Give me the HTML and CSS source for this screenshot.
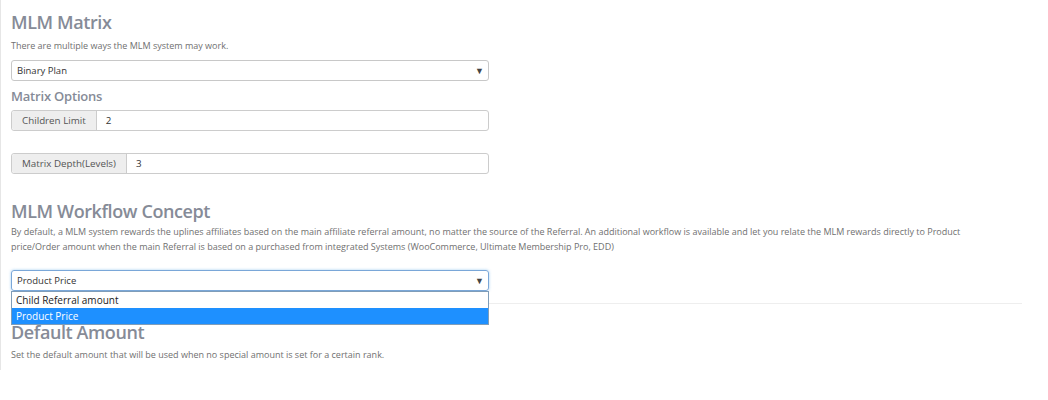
FILE: index.html
```html
<!DOCTYPE html>
<html lang="en">
<head>
    <meta charset="UTF-8">
    <title>MLM Settings</title>
    <link rel="stylesheet" href="styles.css">
</head>
<body>
    <div class="panel">
        <div class="section">
            <h3>MLM Matrix</h3>
            <p class="help">There are multiple ways the MLM system may work.</p>
            <div class="select">Binary Plan<span class="caret">&#9660;</span></div>

            <h4>Matrix Options</h4>
            <div class="input-group">
                <span class="addon">Children Limit</span>
                <span class="field">2</span>
            </div>
            <div class="input-group second">
                <span class="addon">Matrix Depth(Levels)</span>
                <span class="field">3</span>
            </div>
        </div>

        <div class="section workflow">
            <h3>MLM Workflow Concept</h3>
            <p class="help">By default, a MLM system rewards the uplines affiliates based on the main affiliate referral amount, no matter the source of the Referral. An additional workflow is available and let you relate the MLM rewards directly to Product price/Order amount when the main Referral is based on a purchased from integrated Systems (WooCommerce, Ultimate Membership Pro, EDD)</p>
            <div class="select-wrap">
                <div class="select focused">Product Price<span class="caret">&#9660;</span></div>
                <ul class="options">
                    <li>Child Referral amount</li>
                    <li class="active">Product Price</li>
                </ul>
            </div>
        </div>

        <hr>

        <div class="section last">
            <h3>Default Amount</h3>
            <p class="help">Set the default amount that will be used when no special amount is set for a certain rank.</p>
        </div>
    </div>
</body>
</html>
```

FILE: styles.css
```css
* {
    margin: 0;
    padding: 0;
    box-sizing: border-box;
}

body {
    font-family: 'Open Sans', 'Segoe UI', sans-serif;
    background: #fff;
    color: #555;
}

.panel {
    border-left: 1px solid #e6e6e6;
    width: 1030px;
    height: 370px;
    padding: 8px 0 0 10px;
}

h3 {
    font-size: 18px;
    font-weight: 600;
    letter-spacing: -0.4px;
    color: #868b97;
    line-height: 28px;
}

h4 {
    font-size: 13px;
    font-weight: 600;
    letter-spacing: -0.2px;
    color: #868b97;
    line-height: 20px;
    margin-top: 5px;
}

.help {
    font-size: 9px;
    color: #707070;
    line-height: 15px;
    margin-top: 2px;
    width: 1010px;
}

.select {
    position: relative;
    width: 478px;
    height: 21px;
    border: 1px solid #c8c8c8;
    border-radius: 3px;
    font-size: 9.5px;
    color: #333;
    line-height: 19px;
    padding-left: 5px;
    margin-top: 7px;
}

.caret {
    position: absolute;
    right: 4px;
    top: 0;
    font-size: 9px;
    color: #444;
}

.input-group {
    display: flex;
    width: 478px;
    height: 21px;
    border: 1px solid #ccc;
    border-radius: 3px;
    margin-top: 4px;
    font-size: 9.8px;
    line-height: 19px;
}

.input-group.second {
    margin-top: 22px;
}

.addon {
    background: #eee;
    border-right: 1px solid #ccc;
    color: #555;
    padding: 0 10px;
    border-radius: 3px 0 0 3px;
}

.field {
    color: #333;
    padding-left: 9px;
}

.workflow {
    margin-top: 23px;
}

.workflow .help {
    margin-top: -1px;
    width: 980px;
}

.select-wrap {
    position: relative;
    margin-top: 16px;
}

.select.focused {
    margin-top: 0;
    border-color: #7aa7d8;
    box-shadow: 0 0 3px rgba(102, 175, 233, 0.6);
}

.options {
    position: absolute;
    left: 0;
    top: 21px;
    width: 478px;
    list-style: none;
    border: 1px solid #7f9db9;
    background: #fff;
    font-size: 10px;
    color: #222;
    z-index: 2;
}

.options li {
    height: 16px;
    line-height: 16px;
    padding-left: 4px;
}

.options li.active {
    background: #1e90ff;
    color: #fff;
}

hr {
    border: none;
    border-top: 1px solid #eee;
    width: 1011px;
    margin-top: 12px;
}

.last h3 {
    line-height: 16px;
    margin-top: 20px;
}

.last .help {
    margin-top: 7px;
}
```
